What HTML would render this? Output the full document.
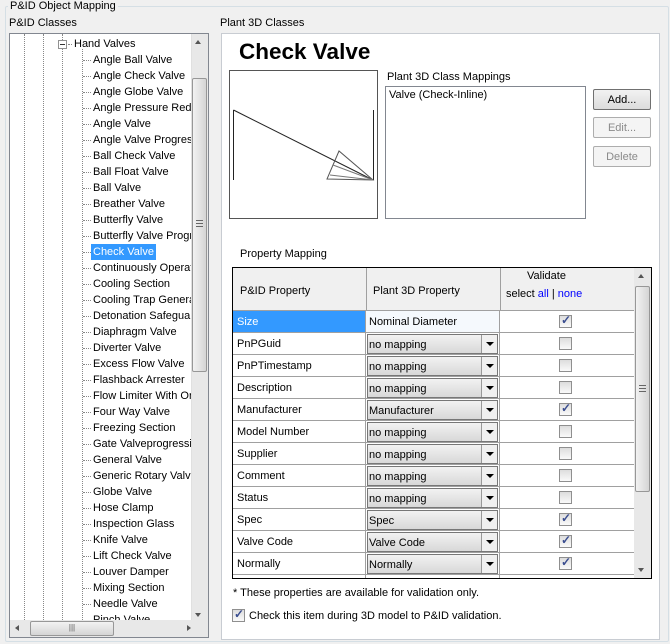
<!DOCTYPE html>
<html><head><meta charset="utf-8"><style>
*{margin:0;padding:0;box-sizing:border-box}
body{width:670px;height:644px;background:#f0f0f0;font-family:"Liberation Sans",sans-serif;font-size:11px;color:#000;position:relative;overflow:hidden}
.a{position:absolute;white-space:nowrap}
.t{position:absolute;left:92px;height:16px;line-height:17px;padding:0 2px;white-space:nowrap}
.h{position:absolute;left:82px;width:8px;border-top:1px dotted #888}
.row{position:absolute;left:233px;width:401px;height:22px;border-bottom:1px solid #a0a0a0}
.c1{position:absolute;left:0;top:0;width:133px;height:21px;line-height:23px;padding-left:4px;border-right:1px solid #a0a0a0;background:#fff}
.c2{position:absolute;left:133px;top:0;width:134px;height:21px;border-right:1px solid #a0a0a0;background:#fff}
.cb{position:absolute;left:1px;top:1px;width:131px;height:20px;border:1px solid #777;background:linear-gradient(#f2f2f2,#d8d8d8);line-height:20px;padding-left:1px}
.cb i{position:absolute;right:0;top:0;width:16px;height:18px;border-left:1px solid #999;background:#f0f0f0}
.cb i:after{content:"";position:absolute;left:4px;top:7px;border:4px solid transparent;border-top:4px solid #000;border-bottom:0}
.chk{position:absolute;left:326px;top:4px;width:13px;height:13px;border:1px solid #8f8f8f;background:linear-gradient(#ddd,#fafafa)}
.chk.on:after{content:"✓";position:absolute;left:1px;top:-3px;font-size:12px;color:#3a4d8f;font-weight:bold}
.btn{position:absolute;left:593px;width:58px;height:21px;border:1px solid #adadad;border-radius:2px;background:#f4f4f4;text-align:center;line-height:20px;color:#8a8a8a}
</style></head><body>
<div class="a" style="left:5px;top:6px;width:664px;height:636px;border:1px solid #d5dfe5;border-radius:2px"></div>
<div class="a" style="left:8px;top:0px;background:#f0f0f0;padding:0 2px">P&amp;ID Object Mapping</div>
<div class="a" style="left:9px;top:17px">P&amp;ID Classes</div>
<div class="a" style="left:220px;top:17px">Plant 3D Classes</div>

<!-- tree -->
<div class="a" style="left:9px;top:33px;width:200px;height:605px;border:1px solid #828790;background:#fff;overflow:hidden">
<div style="position:absolute;left:-9px;top:-33px;width:220px;height:620px">
<div class="a" style="left:23px;top:33px;height:590px;border-left:1px dotted #888"></div>
<div class="a" style="left:42px;top:33px;height:590px;border-left:1px dotted #888"></div>
<div class="a" style="left:61px;top:33px;height:590px;border-left:1px dotted #888"></div>
<div class="a" style="left:81px;top:48px;height:575px;border-left:1px dotted #888"></div>
<div class="a" style="left:57px;top:39px;width:9px;height:9px;border:1px solid #919191;background:#fff"><div style="position:absolute;left:1px;top:3px;width:5px;height:1px;background:#333"></div></div>
<div class="a" style="left:67px;top:43px;width:4px;border-top:1px dotted #888"></div>
<div class="t" style="left:71px;top:35px">Hand Valves</div>
<div id="items"></div>
</div>
<div class="a" style="left:181px;top:0;width:17px;height:586px;background:#e8e8e8;border-left:1px solid #e0e0e0"></div>
<div class="a" style="left:185px;top:6px;border:3.5px solid transparent;border-bottom:4px solid #555;border-top:0"></div>
<div class="a" style="left:182px;top:44px;width:15px;height:294px;border:1px solid #979797;border-radius:2px;background:linear-gradient(90deg,#f2f2f2,#d5d5d5)"></div>
<div class="a" style="left:186px;top:186px;width:7px;height:7px;border-top:1px solid #666;border-bottom:1px solid #666"><div style="margin-top:2px;border-top:1px solid #666"></div></div>
<div class="a" style="left:185px;top:579px;border:3.5px solid transparent;border-top:4px solid #555;border-bottom:0"></div>
<div class="a" style="left:0;top:586px;width:198px;height:17px;background:#e8e8e8"></div>
<div class="a" style="left:5px;top:591px;border:3.5px solid transparent;border-right:4px solid #555;border-left:0"></div>
<div class="a" style="left:20px;top:587px;width:84px;height:15px;border:1px solid #979797;border-radius:2px;background:linear-gradient(#f2f2f2,#d5d5d5);text-align:center;font-size:8px;line-height:12px;color:#555">|||</div>
<div class="a" style="left:177px;top:591px;border:3.5px solid transparent;border-left:4px solid #555;border-right:0"></div>
</div>

<!-- right panel -->
<div class="a" style="left:221px;top:33px;width:439px;height:607px;border:1px solid #c8ccd2;background:#fff"></div>
<div class="a" style="left:239px;top:39px;font-size:22.5px;font-weight:bold">Check Valve</div>
<div class="a" style="left:229px;top:70px;width:149px;height:149px;border:1px solid #555;background:#fff">
<svg width="147" height="147" style="position:absolute;left:0;top:0"><g fill="none" stroke="#222" stroke-width="1"><path d="M3.5 39V109M143.5 39V109M3.5 39L143 109"/><path d="M109 80L97 108L143 109Z" stroke="#555"/><path d="M103 94L143 109M100 104L143 109" stroke="#777"/></g></svg></div>
<div class="a" style="left:387px;top:71px">Plant 3D Class Mappings</div>
<div class="a" style="left:385px;top:86px;width:201px;height:133px;border:1px solid #828790;background:#fff;padding:2px 3px">Valve (Check-Inline)</div>
<div class="btn" style="top:89px;border-color:#707070;color:#000;background:linear-gradient(#f2f2f2,#dcdcdc)">Add...</div>
<div class="btn" style="top:117px">Edit...</div>
<div class="btn" style="top:146px">Delete</div>
<div class="a" style="left:240px;top:248px">Property Mapping</div>

<div class="a" style="left:232px;top:267px;width:420px;height:312px;border:1px solid #000;background:#fff"></div>
<div class="a" style="left:233px;top:268px;width:401px;height:43px;background:#f0f0f0;border-bottom:1px solid #a0a0a0"></div>
<div class="a" style="left:366px;top:268px;height:43px;border-left:1px solid #a0a0a0"></div>
<div class="a" style="left:500px;top:268px;height:43px;border-left:1px solid #a0a0a0"></div>
<div class="a" style="left:240px;top:285px">P&amp;ID Property</div>
<div class="a" style="left:373px;top:285px">Plant 3D Property</div>
<div class="a" style="left:527px;top:270px">Validate</div>
<div class="a" style="left:506px;top:288px">select <span style="color:#00f">all</span> | <span style="color:#00f">none</span></div>
<div id="rows"></div>
<div class="a" style="left:634px;top:268px;width:17px;height:310px;background:#e8e8e8"></div>
<div class="a" style="left:638px;top:274px;border:3.5px solid transparent;border-bottom:4px solid #555;border-top:0"></div>
<div class="a" style="left:635px;top:286px;width:15px;height:206px;border:1px solid #979797;border-radius:2px;background:linear-gradient(90deg,#f2f2f2,#d5d5d5)"></div>
<div class="a" style="left:639px;top:385px;width:7px;height:7px;border-top:1px solid #666;border-bottom:1px solid #666"><div style="margin-top:2px;border-top:1px solid #666"></div></div>
<div class="a" style="left:638px;top:568px;border:3.5px solid transparent;border-top:4px solid #555;border-bottom:0"></div>

<div class="a" style="left:233px;top:587px">* These properties are available for validation only.</div>
<div class="a" style="left:232px;top:609px;width:13px;height:13px;border:1px solid #8f8f8f;background:linear-gradient(#ddd,#fafafa)"><span style="position:absolute;left:1px;top:-3px;font-size:12px;color:#3a4d8f;font-weight:bold">✓</span></div>
<div class="a" style="left:249px;top:610px">Check this item during 3D model to P&amp;ID validation.</div>

<script>
var it=["Angle Ball Valve","Angle Check Valve","Angle Globe Valve","Angle Pressure Redu","Angle Valve","Angle Valve Progress","Ball Check Valve","Ball Float Valve","Ball Valve","Breather Valve","Butterfly Valve","Butterfly Valve Progre","Check Valve","Continuously Operate","Cooling Section","Cooling Trap Genera","Detonation Safeguar","Diaphragm Valve","Diverter Valve","Excess Flow Valve","Flashback Arrester","Flow Limiter With Orif","Four Way Valve","Freezing Section","Gate Valveprogressiv","General Valve","Generic Rotary Valve","Globe Valve","Hose Clamp","Inspection Glass","Knife Valve","Lift Check Valve","Louver Damper","Mixing Section","Needle Valve","Pinch Valve"];
var h="";it.forEach(function(s,i){var y=51+16*i;h+='<div class="h" style="top:'+(y+8)+'px"></div><div class="t" style="top:'+y+'px;left:90px;'+(s=="Check Valve"?'background:#3399ff;color:#fff':'')+'">'+s+'</div>';});
document.getElementById("items").outerHTML=h;
var r=[["Size","Nominal Diameter",1,0],["PnPGuid","no mapping",0,1],["PnPTimestamp","no mapping",0,1],["Description","no mapping",0,1],["Manufacturer","Manufacturer",1,1],["Model Number","no mapping",0,1],["Supplier","no mapping",0,1],["Comment","no mapping",0,1],["Status","no mapping",0,1],["Spec","Spec",1,1],["Valve Code","Valve Code",1,1],["Normally","Normally",1,1],["","",0,0]];
h="";r.forEach(function(a,i){var y=311+22*i;h+='<div class="row" style="top:'+y+'px;'+(i==12?'border:0;height:'+(578-y)+'px;overflow:hidden':'')+'"><div class="c1" style="'+(i==0?'background:#3399ff;color:#fff':'')+'">'+a[0]+'</div><div class="c2">'+(a[3]?'<div class="cb">'+a[1]+'<i></i></div>':(i==0?'<div style="padding-left:3px;line-height:23px;background:#f5f9fd;height:21px">'+a[1]+'</div>':''))+'</div>'+(i<12?'<div class="chk'+(a[2]?' on':'')+'"></div>':'')+'</div>';});
document.getElementById("rows").outerHTML=h;
</script>
</body></html>
